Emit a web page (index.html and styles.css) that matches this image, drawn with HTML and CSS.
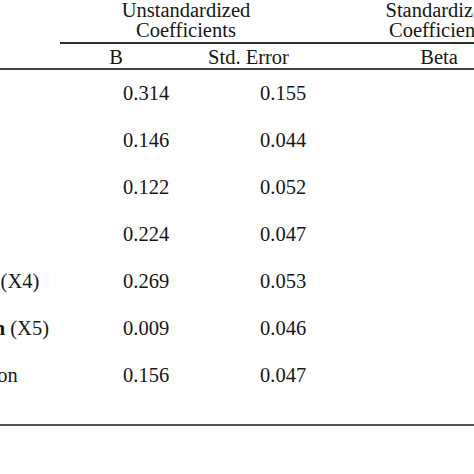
FILE: index.html
```html
<!DOCTYPE html>
<html lang="en">
<head>
    <meta charset="UTF-8">
    <title>Coefficients</title>
    <link rel="stylesheet" href="styles.css">
</head>
<body>
    <table class="coef-table">
        <colgroup>
            <col class="col-label">
            <col class="col-b">
            <col class="col-se">
            <col class="col-beta">
        </colgroup>
        <thead>
            <tr>
                <th class="label-head" rowspan="2"></th>
                <th class="group-head" colspan="2">Unstandardized<br>Coefficients</th>
                <th class="group-head">Standardized<br>Coefficients</th>
            </tr>
            <tr>
                <th class="sub-head">B</th>
                <th class="sub-head sub-se">Std. Error</th>
                <th class="sub-head">Beta</th>
            </tr>
        </thead>
        <tbody>
            <tr>
                <td class="label">(Constant)</td>
                <td class="num num-b">0.314</td>
                <td class="num num-se">0.155</td>
                <td class="num"></td>
            </tr>
            <tr>
                <td class="label">Price (X1)</td>
                <td class="num num-b">0.146</td>
                <td class="num num-se">0.044</td>
                <td class="num"></td>
            </tr>
            <tr>
                <td class="label">Place (X2)</td>
                <td class="num num-b">0.122</td>
                <td class="num num-se">0.052</td>
                <td class="num"></td>
            </tr>
            <tr>
                <td class="label">Trust (X3)</td>
                <td class="num num-b">0.224</td>
                <td class="num num-se">0.047</td>
                <td class="num"></td>
            </tr>
            <tr>
                <td class="label">Brand Image (X4)</td>
                <td class="num num-b">0.269</td>
                <td class="num num-se">0.053</td>
                <td class="num"></td>
            </tr>
            <tr>
                <td class="label"><b>Organization</b> (X5)</td>
                <td class="num num-b">0.009</td>
                <td class="num num-se">0.046</td>
                <td class="num"></td>
            </tr>
            <tr class="last-row">
                <td class="label">Web Promotion</td>
                <td class="num num-b">0.156</td>
                <td class="num num-se">0.047</td>
                <td class="num"></td>
            </tr>
        </tbody>
    </table>
</body>
</html>
```

FILE: styles.css
```css
html, body {
    margin: 0;
    padding: 0;
    background: #ffffff;
    overflow: hidden;
    width: 474px;
    height: 474px;
}

.coef-table {
    font-family: "Liberation Serif", "Times New Roman", serif;
    font-size: 20.5px;
    color: #161616;
    border-collapse: separate;
    border-spacing: 0;
    table-layout: fixed;
    width: 677px;
    margin-left: -111px;
}
.col-label {
    width: 171px;
}
.col-b {
    width: 112px;
}
.col-se {
    width: 140px;
}
.col-beta {
    width: 254px;
}

th {
    font-weight: normal;
    padding: 0;
}
.label-head {
    border-bottom: 2px solid #444;
}
.group-head {
    line-height: 20px;
    padding-bottom: 2px;
    text-align: center;
    border-bottom: 2px solid #2e2e2e;
    vertical-align: top;
}
.sub-head {
    line-height: 21px;
    padding-top: 3px;
    text-align: center;
    border-bottom: 2px solid #444;
}
.sub-se {
    padding-left: 13px;
}

td {
    line-height: 21px;
    padding: 13px 0;
    white-space: nowrap;
}
.label {
    text-align: left;
    overflow: hidden;
}
.num {
    text-align: left;
}
.num-b {
    padding-left: 63px;
}
.num-se {
    padding-left: 88px;
}
.last-row td {
    padding-bottom: 38px;
    border-bottom: 2px solid #555;
}
```
